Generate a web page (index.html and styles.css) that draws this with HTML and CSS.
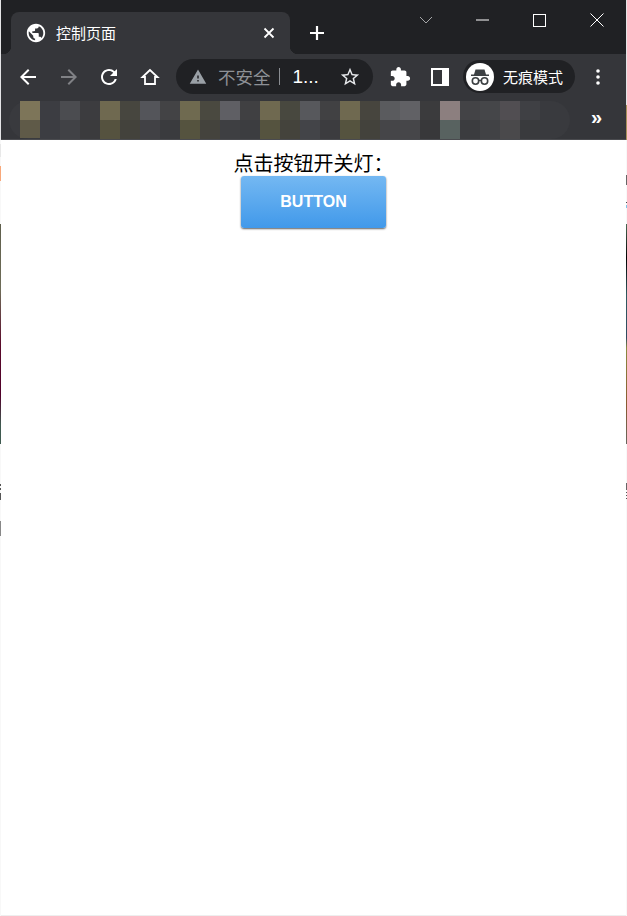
FILE: index.html
```html
<!DOCTYPE html>
<html lang="zh-CN">
<head>
  <meta charset="UTF-8" />
  <title>控制页面</title>
  <link rel="stylesheet" href="styles.css">
</head>
<body>
  <div class="edge edge-left"></div>
  <div class="window">
    <div class="tabstrip">
      <div class="tab">
        <svg class="favicon" viewBox="0 0 24 24"><path fill="#fff" d="M12 2C6.48 2 2 6.48 2 12s4.48 10 10 10 10-4.48 10-10S17.52 2 12 2zm-1 17.93c-3.95-.49-7-3.85-7-7.93 0-.62.08-1.21.21-1.79L9 15v1c0 1.1.9 2 2 2v1.93zm6.9-2.54c-.26-.81-1-1.39-1.9-1.39h-1v-3c0-.55-.45-1-1-1H8v-2h2c.55 0 1-.45 1-1V7h2c1.1 0 2-.9 2-2v-.41c2.93 1.19 5 4.06 5 7.41 0 2.08-.8 3.97-2.1 5.39z"/></svg>
        <span class="tab-title">控制页面</span>
        <svg class="tab-close" viewBox="0 0 12 12"><path d="M1.5 1.5l9 9M10.5 1.5l-9 9" stroke="#fff" stroke-width="1.8" fill="none"/></svg>
      </div>
      <svg class="new-tab" viewBox="0 0 16 16"><path d="M8 1v14M1 8h14" stroke="#fff" stroke-width="2.2" fill="none"/></svg>
      <div class="win-controls">
        <div class="win-btn"><svg width="14" height="8" viewBox="0 0 14 8"><path d="M1 1l6 6 6-6" stroke="#a5a6a8" fill="none"/></svg></div>
        <div class="win-btn"><svg width="14" height="2" viewBox="0 0 14 2"><path d="M0 1h13" stroke="#fff" fill="none"/></svg></div>
        <div class="win-btn"><svg width="13" height="13" viewBox="0 0 13 13"><rect x=".5" y=".5" width="12" height="12" stroke="#fff" fill="none"/></svg></div>
        <div class="win-btn"><svg width="14" height="14" viewBox="0 0 14 14"><path d="M.5.5l13 13M13.5.5l-13 13" stroke="#fff" fill="none"/></svg></div>
      </div>
    </div>

    <div class="toolbar">
      <div class="nav-btns">
        <svg class="icon" viewBox="0 0 24 24"><path fill="#fff" d="M20 11H7.83l5.59-5.59L12 4l-8 8 8 8 1.41-1.41L7.83 13H20v-2z"/></svg>
        <svg class="icon" viewBox="0 0 24 24"><path fill="#808185" d="M4 11h12.17l-5.59-5.59L12 4l8 8-8 8-1.41-1.41L16.17 13H4v-2z"/></svg>
        <svg class="icon" viewBox="0 0 24 24"><path fill="#fff" d="M17.65 6.35A7.958 7.958 0 0 0 12 4c-4.42 0-7.99 3.58-7.99 8s3.57 8 7.99 8c3.73 0 6.84-2.55 7.73-6h-2.08A5.99 5.99 0 0 1 12 18c-3.31 0-6-2.69-6-6s2.69-6 6-6c1.66 0 3.14.69 4.22 1.78L13 11h7V4l-2.35 2.35z"/></svg>
        <svg class="icon" viewBox="0 0 24 24"><path fill="none" stroke="#fff" stroke-width="1.800" d="M12 5L4.500 12H7v7h10v-7h2.500z"/></svg>
      </div>
      <div class="omnibox">
        <svg class="warn" viewBox="0 0 24 24"><path fill="#9aa0a6" d="M1 21h22L12 2 1 21zm12-3h-2v-2h2v2zm0-4h-2v-4h2v4z"/></svg>
        <span class="not-secure">不安全</span>
        <span class="omni-sep"></span>
        <span class="url">1...</span>
        <svg class="star" viewBox="0 0 24 24"><path fill="#e8eaed" d="M22 9.24l-7.19-.62L12 2 9.19 8.63 2 9.24l5.46 4.73L5.82 21 12 17.27 18.18 21l-1.63-7.03L22 9.24zM12 15.4l-3.76 2.27 1-4.28-3.32-2.88 4.38-.38L12 6.1l1.71 4.04 4.38.38-3.32 2.88 1 4.28L12 15.4z"/></svg>
      </div>
      <svg class="icon puzzle" viewBox="0 0 24 24"><path fill="#fff" d="M20.5 11H19V7c0-1.1-.9-2-2-2h-4V3.5C13 2.12 11.88 1 10.5 1S8 2.12 8 3.5V5H4c-1.1 0-1.99.9-1.99 2v3.8H3.5c1.49 0 2.7 1.21 2.7 2.7s-1.21 2.7-2.7 2.7H2V20c0 1.1.9 2 2 2h3.8v-1.5c0-1.49 1.21-2.7 2.7-2.7 1.49 0 2.7 1.21 2.7 2.7V22H17c1.1 0 2-.9 2-2v-4h1.5c1.38 0 2.5-1.12 2.5-2.5S21.88 11 20.5 11z"/></svg>
      <svg class="panel-icon" viewBox="0 0 18 18"><path fill="#fff" fill-rule="evenodd" d="M0 0h18v18H0zM2 2v14h9V2z"/></svg>
      <div class="profile">
        <div class="avatar">
          <svg viewBox="0 0 28 28"><path fill="#3c4043" d="M9.5 6.5h9l1.5 5h3v1.5H5V11.500h3z"/><circle cx="9.500" cy="18" r="3.200" fill="none" stroke="#3c4043" stroke-width="1.600"/><circle cx="18.500" cy="18" r="3.200" fill="none" stroke="#3c4043" stroke-width="1.600"/><path d="M12.500 17.500h3" stroke="#3c4043" stroke-width="1.400"/></svg>
        </div>
        <span class="profile-name">无痕模式</span>
      </div>
      <svg class="menu" viewBox="0 0 4 16"><circle cx="2" cy="2" r="1.800" fill="#fff"/><circle cx="2" cy="8" r="1.800" fill="#fff"/><circle cx="2" cy="14" r="1.800" fill="#fff"/></svg>
    </div>

    <div class="bookmarks">
      <svg class="blur" width="561" height="38" viewBox="0 0 561 38">
        <rect width="561" height="38" rx="19" fill="#393a3e"/>
        <rect x="11" width="20" height="19" fill="#7d7559"/><rect x="11" y="19" width="20" height="18" fill="#5f5a48"/>
        <rect x="31" width="20" height="38" fill="#3c3d42"/>
        <rect x="51" width="20" height="19" fill="#4b4c50"/><rect x="51" y="19" width="20" height="19" fill="#414246"/>
        <rect x="71" width="20" height="19" fill="#3c3c3f"/><rect x="71" y="19" width="20" height="19" fill="#3b3b3d"/>
        <rect x="91" width="20" height="19" fill="#6f6950"/><rect x="91" y="19" width="20" height="19" fill="#55523f"/>
        <rect x="111" width="20" height="19" fill="#47463f"/><rect x="111" y="19" width="20" height="19" fill="#43423c"/>
        <rect x="131" width="20" height="19" fill="#54555a"/><rect x="131" y="19" width="20" height="19" fill="#414145"/>
        <rect x="151" width="20" height="19" fill="#434345"/><rect x="151" y="19" width="20" height="19" fill="#3a3b3e"/>
        <rect x="171" width="20" height="19" fill="#6f6a50"/><rect x="171" y="19" width="20" height="19" fill="#55533f"/>
        <rect x="191" width="20" height="19" fill="#4a4940"/><rect x="191" y="19" width="20" height="19" fill="#44433d"/>
        <rect x="211" width="20" height="19" fill="#5f5f64"/><rect x="211" y="19" width="20" height="19" fill="#3e3f42"/>
        <rect x="231" width="20" height="19" fill="#404042"/><rect x="231" y="19" width="20" height="19" fill="#3c3d40"/>
        <rect x="251" width="20" height="19" fill="#6f6950"/><rect x="251" y="19" width="20" height="19" fill="#55533f"/>
        <rect x="271" width="20" height="19" fill="#48483f"/><rect x="271" y="19" width="20" height="19" fill="#44433c"/>
        <rect x="291" width="20" height="19" fill="#57585c"/><rect x="291" y="19" width="20" height="19" fill="#434448"/>
        <rect x="311" width="20" height="19" fill="#414143"/><rect x="311" y="19" width="20" height="19" fill="#3c3c3f"/>
        <rect x="331" width="20" height="19" fill="#6f6950"/><rect x="331" y="19" width="20" height="19" fill="#55533f"/>
        <rect x="351" width="20" height="19" fill="#47453e"/><rect x="351" y="19" width="20" height="19" fill="#43423c"/>
        <rect x="371" width="20" height="19" fill="#5a5b5e"/><rect x="371" y="19" width="20" height="19" fill="#454548"/>
        <rect x="391" width="20" height="19" fill="#616165"/><rect x="391" y="19" width="20" height="19" fill="#464649"/>
        <rect x="411" width="20" height="19" fill="#3b3b3d"/><rect x="411" y="19" width="20" height="19" fill="#38383a"/>
        <rect x="431" width="20" height="19" fill="#8c7f7f"/><rect x="431" y="19" width="20" height="19" fill="#586260"/>
        <rect x="451" width="20" height="19" fill="#434346"/><rect x="451" y="19" width="20" height="19" fill="#3b3c3f"/>
        <rect x="471" width="20" height="19" fill="#454649"/><rect x="471" y="19" width="20" height="19" fill="#414245"/>
        <rect x="491" width="20" height="19" fill="#514e52"/><rect x="491" y="19" width="20" height="19" fill="#4a494b"/>
        <rect x="511" width="20" height="19" fill="#3f4044"/><rect x="511" y="19" width="20" height="19" fill="#393a3d"/>
      </svg>
      <span class="more">»</span>
    </div>

    <div class="page">
      <div class="prompt">点击按钮开关灯：</div>
      <button class="btn">BUTTON</button>
    </div>
  </div>
  <div class="edge edge-right"></div>
</body>
</html>
```

FILE: styles.css
```css
html, body {
  margin: 0;
  padding: 0;
}
body {
  display: flex;
  width: 627px;
  height: 916px;
  overflow: hidden;
  background-color: #fff;
  font-family: "Liberation Sans", "Noto Sans CJK SC", sans-serif;
}
svg {
  display: block;
  flex: none;
}
.edge {
  width: 1px;
  flex: none;
}
.edge-left {
  background: linear-gradient(to bottom,
    #e4e4e6 0, #e4e4e6 140px,
    #f8f8f8 140px, #f8f8f8 144px,
    #e8e8e8 144px, #e8e8e8 157px,
    #f8f8f8 157px, #f8f8f8 166px,
    #f8a87a 166px, #f8a87a 181px,
    #f8f8f8 181px, #f8f8f8 224px,
    #5f5f4c 224px, #6e6c58 290px, #5a0a2a 345px, #50002a 395px, #3f5a50 425px, #3f5a50 444px,
    #f8f8f8 444px, #f8f8f8 484px,
    #555 484px, #555 486px, #f8f8f8 486px, #f8f8f8 488px,
    #555 488px, #555 490px, #f8f8f8 490px, #f8f8f8 493px,
    #555 493px, #555 500px,
    #f8f8f8 500px, #f8f8f8 521px,
    #888 521px, #888 536px,
    #f8f8f8 536px, #f8f8f8 916px);
}
.edge-right {
  background: linear-gradient(to bottom,
    #e4e4e6 0, #e4e4e6 105px,
    #a8905a 105px, #a8905a 140px,
    #f8f8f8 140px, #f8f8f8 175px,
    #666 175px, #666 185px,
    #f8f8f8 185px, #f8f8f8 202px,
    #444 202px, #444 203px, #f8f8f8 203px, #f8f8f8 205px,
    #7cc4e8 205px, #7cc4e8 208px,
    #f8f8f8 208px, #f8f8f8 224px,
    #4a6a55 224px, #000 258px, #2f5a60 295px, #2f4a60 338px, #8a8a40 348px, #8a5a30 405px, #66665e 444px,
    #f8f8f8 444px, #f8f8f8 483px,
    #666 483px, #666 490px, #f8f8f8 490px, #f8f8f8 492px,
    #555 492px, #555 493px, #f8f8f8 493px, #f8f8f8 495px,
    #555 495px, #555 496px, #f8f8f8 496px, #f8f8f8 498px,
    #555 498px, #555 499px,
    #f8f8f8 499px, #f8f8f8 916px);
}
.window {
  flex: 1;
  min-width: 0;
  display: flex;
  flex-direction: column;
}
.tabstrip {
  height: 54px;
  flex: none;
  display: flex;
  align-items: flex-start;
  background-color: #202124;
}
.tab {
  position: relative;
  width: 279px;
  height: 42px;
  margin: 12px 0 0 10px;
  padding: 1px 15px 0 14px;
  box-sizing: border-box;
  display: flex;
  align-items: center;
  background-color: #35363a;
  border-radius: 8px 8px 0 0;
  color: #fff;
}
.tab::before,
.tab::after {
  content: "";
  position: absolute;
  bottom: 0;
  width: 8px;
  height: 8px;
}
.tab::before {
  left: -8px;
  background: radial-gradient(circle at 0 0, #202124 8px, #35363a 8.5px);
}
.tab::after {
  right: -8px;
  background: radial-gradient(circle at 100% 0, #202124 8px, #35363a 8.5px);
}
.favicon {
  width: 22px;
  height: 22px;
  margin-top: -1px;
}
.tab-title {
  margin-left: 9px;
  flex: 1;
  font-size: 15px;
  line-height: 20px;
}
.tab-close {
  width: 12px;
  height: 12px;
  margin-top: -1px;
}
.new-tab {
  width: 16px;
  height: 16px;
  margin: 25px 0 0 19px;
}
.win-controls {
  margin-left: auto;
  margin-right: 1px;
  display: flex;
}
.win-btn {
  width: 57px;
  height: 40px;
  display: flex;
  align-items: center;
  justify-content: center;
}
.toolbar {
  height: 45px;
  flex: none;
  display: flex;
  align-items: center;
  background-color: #35363a;
}
.nav-btns {
  display: flex;
  gap: 16.5px;
  margin-left: 15px;
}
.icon {
  width: 24px;
  height: 24px;
}
.omnibox {
  width: 197px;
  height: 35px;
  margin-left: 14.5px;
  box-sizing: border-box;
  padding: 0 12px 0 13px;
  display: flex;
  align-items: center;
  background-color: #202124;
  border-radius: 18px;
}
.warn {
  width: 18px;
  height: 18px;
}
.not-secure {
  margin-left: 11px;
  font-size: 17.5px;
  color: #8e9196;
}
.omni-sep {
  width: 1px;
  height: 17px;
  margin: 0 13px 0 8px;
  background-color: #8a8d92;
}
.url {
  font-size: 19px;
  color: #fff;
}
.star {
  width: 22px;
  height: 22px;
  margin-left: auto;
}
.puzzle {
  width: 22px;
  height: 22px;
  margin-left: 16px;
}
.panel-icon {
  width: 18px;
  height: 18px;
  margin-left: 20px;
}
.profile {
  width: 112px;
  height: 33px;
  margin-left: 14px;
  box-sizing: border-box;
  padding-left: 3px;
  display: flex;
  align-items: center;
  background-color: #202124;
  border-radius: 17px;
}
.avatar {
  width: 28px;
  height: 28px;
  background-color: #fff;
  border-radius: 50%;
}
.profile-name {
  margin-left: 9px;
  font-size: 15px;
  color: #fff;
}
.menu {
  width: 4px;
  height: 16px;
  margin-left: 21px;
}
.bookmarks {
  height: 41px;
  flex: none;
  display: flex;
  align-items: flex-start;
  box-sizing: border-box;
  padding: 2px 0 0 8px;
  background-color: #35363a;
  border-bottom: 1px solid #4a4b4f;
}
.more {
  margin: 6px 0 0 21px;
  font-size: 20px;
  font-weight: bold;
  line-height: 20px;
  color: #fff;
}
.page {
  flex: 1;
  display: flex;
  flex-direction: column;
  align-items: center;
  padding-top: 13px;
  background-color: #fff;
  border-bottom: 1px solid #eee;
}
.prompt {
  font-size: 20px;
  line-height: 23px;
  color: #000;
}
.btn {
  width: 145px;
  height: 52px;
  padding: 0;
  background: linear-gradient(to bottom, #74b8f2, #4199ea);
  border: 0;
  border-radius: 3px;
  box-shadow: 0 1px 2px #000000a0;
  font-family: "Liberation Sans", sans-serif;
  font-size: 16px;
  font-weight: bold;
  color: #fff;
}
```
